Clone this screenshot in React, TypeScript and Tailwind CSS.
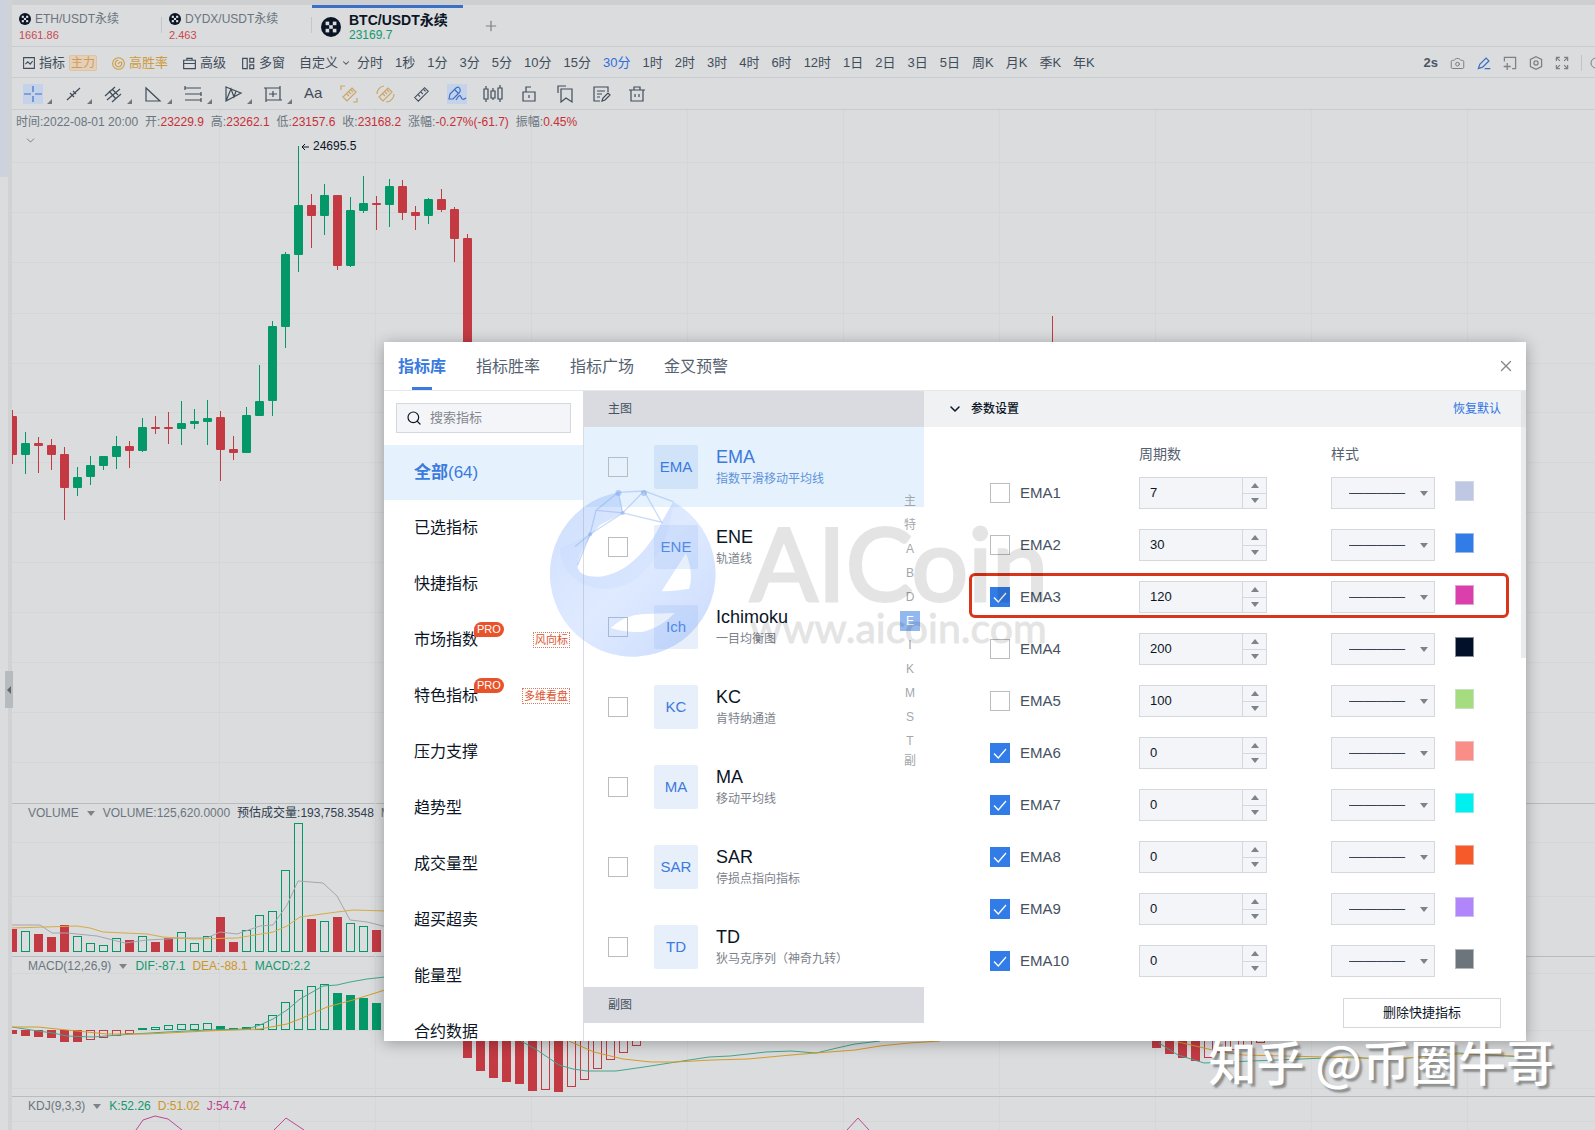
import React from 'react';
import { Camera, ChevronDown, Plus, Search, X } from 'lucide-react';

const UP = '#049868';
const DOWN = '#c33a43';
const STEP = 13;

// [direction, high, body top, body bottom, low]
type Candle = ['u' | 'd', number, number, number, number];

const candles: Candle[] = [
  ['d', 300, 306, 345, 354],
  ['u', 322, 333, 345, 364],
  ['d', 327, 333, 336, 363],
  ['d', 329, 335, 345, 360],
  ['d', 337, 344, 378, 410],
  ['u', 357, 367, 378, 386],
  ['u', 346, 355, 367, 375],
  ['u', 346, 346, 356, 360],
  ['u', 326, 336, 347, 359],
  ['d', 331, 336, 341, 358],
  ['u', 308, 317, 341, 342],
  ['d', 306, 317, 319, 324],
  ['d', 302, 317, 319, 334],
  ['u', 291, 313, 319, 335],
  ['u', 299, 311, 314, 319],
  ['u', 290, 308, 312, 335],
  ['d', 301, 307, 340, 371],
  ['d', 326, 339, 343, 350],
  ['u', 297, 305, 343, 343],
  ['u', 255, 291, 306, 306],
  ['u', 211, 216, 291, 306],
  ['u', 142, 144, 217, 238],
  ['u', 36, 95, 145, 162],
  ['d', 84, 95, 106, 138],
  ['u', 74, 85, 106, 125],
  ['d', 85, 85, 156, 160],
  ['u', 87, 100, 156, 157],
  ['u', 66, 93, 101, 103],
  ['d', 86, 93, 95, 120],
  ['u', 69, 76, 95, 117],
  ['d', 70, 76, 103, 110],
  ['d', 96, 102, 106, 120],
  ['u', 88, 89, 106, 114],
  ['d', 79, 89, 100, 102],
  ['d', 97, 99, 129, 152],
  ['d', 124, 128, 300, 300],
];

const volumeTops = [
  126, 128, 131, 134, 122, 133, 140, 142, 135, 137, 133, 139, 135, 129, 140,
  133, 114, 139, 127, 112, 108, 67, 20, 116, 118, 114, 120, 123, 127,
];

// [index, y of the bar end, solid]
const macdBars: [number, number, boolean][] = [
  [0, 78, true], [1, 80, true], [2, 81, true], [3, 82, true], [4, 86, true], [5, 86, true],
  [6, 84, false], [7, 82, false], [8, 80, false], [9, 78, false],
  [10, 72, true], [11, 71, false], [12, 69, false], [13, 68, false], [14, 68, false], [15, 67, false],
  [16, 70, true], [17, 72, true], [18, 71, true],
  [19, 68, false], [20, 59, false], [21, 46, false], [22, 34, false], [23, 30, false], [24, 28, false],
  [25, 37, true], [26, 39, true], [27, 42, true], [28, 47, true],
  [35, 102, true], [36, 115, true], [37, 122, true], [38, 126, true], [39, 128, true], [40, 135, true],
  [41, 134, false], [42, 136, true], [43, 131, false], [44, 124, false], [45, 113, false],
  [46, 104, false], [47, 97, false], [48, 90, false],
  [88, 92, true], [89, 98, true], [90, 102, true], [91, 105, true],
  [92, 102, false], [93, 97, false], [94, 94, false], [95, 90, false], [96, 87, false],
];

const periods = [
  '分时', '1秒', '1分', '3分', '5分', '10分', '15分', '30分', '1时', '2时', '3时', '4时',
  '6时', '12时', '1日', '2日', '3日', '5日', '周K', '月K', '季K', '年K',
];

const quote = [
  ['开', '23229.9'],
  ['高', '23262.1'],
  ['低', '23157.6'],
  ['收', '23168.2'],
  ['涨幅', '-0.27%(-61.7)'],
  ['振幅', '0.45%'],
];

const categories: { name: string; pro?: boolean; tag?: string }[] = [
  { name: '已选指标' },
  { name: '快捷指标' },
  { name: '市场指数', pro: true, tag: '风向标' },
  { name: '特色指标', pro: true, tag: '多维看盘' },
  { name: '压力支撑' },
  { name: '趋势型' },
  { name: '成交量型' },
  { name: '超买超卖' },
  { name: '能量型' },
  { name: '合约数据' },
];

const indicators = [
  { short: 'EMA', name: 'EMA', desc: '指数平滑移动平均线', active: true },
  { short: 'ENE', name: 'ENE', desc: '轨道线' },
  { short: 'Ich', name: 'Ichimoku', desc: '一目均衡图' },
  { short: 'KC', name: 'KC', desc: '肯特纳通道' },
  { short: 'MA', name: 'MA', desc: '移动平均线' },
  { short: 'SAR', name: 'SAR', desc: '停损点指向指标' },
  { short: 'TD', name: 'TD', desc: '狄马克序列（神奇九转）' },
];

const letters = ['主', '特', 'A', 'B', 'D', 'E', 'I', 'K', 'M', 'S', 'T', '副'];

const params = [
  { name: 'EMA1', value: 7, checked: false, color: 'bg-[#bfc8e2]' },
  { name: 'EMA2', value: 30, checked: false, color: 'bg-[#327ce8]' },
  { name: 'EMA3', value: 120, checked: true, color: 'bg-[#db3fab]', marked: true },
  { name: 'EMA4', value: 200, checked: false, color: 'bg-[#02102a]' },
  { name: 'EMA5', value: 100, checked: false, color: 'bg-[#a6dc80]' },
  { name: 'EMA6', value: 0, checked: true, color: 'bg-[#fa8d88]' },
  { name: 'EMA7', value: 0, checked: true, color: 'bg-[#00f0f0]' },
  { name: 'EMA8', value: 0, checked: true, color: 'bg-[#f65a2a]' },
  { name: 'EMA9', value: 0, checked: true, color: 'bg-[#b186fb]' },
  { name: 'EMA10', value: 0, checked: true, color: 'bg-[#6c757b]' },
];

const Icon: React.FC<{ children: React.ReactNode; className?: string }> = ({ children, className = 'size-5' }) => (
  <svg viewBox="0 0 20 20" fill="none" stroke="currentColor" strokeWidth="1.2" className={className}>
    {children}
  </svg>
);

const Coin: React.FC<{ className: string }> = ({ className }) => (
  <svg viewBox="0 0 20 20" className={className}>
    <circle cx="10" cy="10" r="10" fill="#0b1424" />
    <g fill="#dadcdd">
      <rect x="4.6" y="4.6" width="3.6" height="3.6" />
      <rect x="11.8" y="4.6" width="3.6" height="3.6" />
      <rect x="8.2" y="8.2" width="3.6" height="3.6" />
      <rect x="4.6" y="11.8" width="3.6" height="3.6" />
      <rect x="11.8" y="11.8" width="3.6" height="3.6" />
    </g>
  </svg>
);

const Caret: React.FC<{ up?: boolean }> = ({ up }) => (
  <svg viewBox="0 0 8 5" className="w-2 h-[5px]" fill="#7d8388">
    <path d={up ? 'M0 5L4 0L8 5Z' : 'M0 0L4 5L8 0Z'} />
  </svg>
);

const Grid: React.FC<{ rows: number[] }> = ({ rows }) => (
  <g stroke="#d4d6d8" strokeWidth="1">
    {rows.map((y) => (
      <line key={y} x1="0" x2="100%" y1={y + 0.5} y2={y + 0.5} />
    ))}
    {Array.from({ length: 10 }, (_, i) => (
      <line key={i} x1={207.5 + i * 156} x2={207.5 + i * 156} y1="0" y2="100%" />
    ))}
  </g>
);

const Bar: React.FC<{ index: number; top: number; bottom: number; color: string; solid: boolean }> = ({
  index, top, bottom, color, solid,
}) => (
  <rect
    x={index * STEP - 3.5}
    y={top + 0.5}
    width="8"
    height={Math.max(bottom - top - 1, 1)}
    fill={solid ? color : 'none'}
    stroke={color}
  />
);

const CheckBox: React.FC<{ label: string; id: string; checked?: boolean }> = ({ label, id, checked }) => (
  <span className="relative size-5 shrink-0">
    <input
      type="checkbox"
      id={id}
      aria-label={label}
      defaultChecked={checked}
      className="peer block size-5 appearance-none border border-[#b9bcc0] checked:border-[#327ce8] checked:bg-[#327ce8]"
    />
    <svg
      viewBox="0 0 20 20"
      fill="none"
      stroke="#fff"
      strokeWidth="1.3"
      className="pointer-events-none absolute inset-0 hidden size-5 peer-checked:block"
    >
      <path d="M4 10.5L8.3 15L16 6" />
    </svg>
  </span>
);

const SymbolTabs = () => (
  <div className="flex h-[42px] border-b border-[#c8cbd0]">
    {[['ETH/USDT永续', '1661.86'], ['DYDX/USDT永续', '2.463']].map(([name, price]) => (
      <button key={name} className="relative flex w-[150px] flex-col items-start pt-[5px] pl-[7px] text-left">
        <span className="flex items-center gap-1 text-xs leading-[18px] text-[#6b7580]">
          <Coin className="size-3" />
          {name}
        </span>
        <span className="text-[11px] leading-[14px] text-[#cc4850]">{price}</span>
        <span className="absolute top-3 right-0 h-4 w-px bg-[#c3c6ca]" />
      </button>
    ))}
    <button className="flex w-[151px] items-center gap-2 border-t-[3px] border-[#3b6fc6] pl-[9px] text-left">
      <Coin className="size-5" />
      <span className="flex flex-col pb-0.5">
        <span className="text-sm leading-[17px] font-bold text-[#0c1526]">BTC/USDT永续</span>
        <span className="text-xs leading-3 text-[#12996e]">23169.7</span>
      </span>
    </button>
    <button aria-label="添加" className="ml-5 text-[#7b8187]">
      <Plus className="size-4" strokeWidth={1.8} />
    </button>
  </div>
);

const PeriodBar = () => (
  <div className="flex h-[31px] items-center border-b border-[#c8cbd0] pt-0.5 pl-[11px] text-[13px] whitespace-nowrap text-[#414c5b]">
    <button className="flex items-center gap-1">
      <Icon className="size-3">
        <path d="M1 1H19V19H1ZM4 12L8 8L12 12L16 7" strokeWidth="1.8" />
      </Icon>
      指标
    </button>
    <button className="ml-1 rounded-xs border border-[#dcc4a8] bg-[#e2d0bb] px-px text-[12px] leading-[14px] text-[#d49b50]">主力</button>
    <button className="ml-[15px] flex items-center gap-1 text-[#cf9b3f]">
      <Icon className="size-[13px]">
        <circle cx="10" cy="10" r="9" strokeWidth="1.6" />
        <path d="M14 7A5 5 0 1 1 10 5M9 11L13 7" strokeWidth="1.8" />
      </Icon>
      高胜率
    </button>
    <button className="ml-[15px] flex items-center gap-1">
      <Icon className="size-[13px]">
        <path d="M1 5H19V18H1ZM1 10H19M6 5V2H14V5" strokeWidth="1.8" />
      </Icon>
      高级
    </button>
    <button className="ml-4 flex items-center gap-1">
      <Icon className="size-[13px]">
        <path d="M1 2H8V18H1ZM12 2H18V8H12ZM12 12H18V18H12Z" strokeWidth="1.8" />
      </Icon>
      多窗
    </button>
    <button className="ml-[14px] flex items-center gap-[3px]">
      自定义
      <ChevronDown className="size-[10px]" strokeWidth={2.5} />
    </button>
    <div className="ml-[6px] flex gap-3">
      {periods.map((p) => (
        <button key={p} className={p === '30分' ? 'text-[#2f6fdc]' : ''}>{p}</button>
      ))}
    </div>
    <div className="-mr-1 ml-auto flex items-center gap-3 text-[#7b8187]">
      <span className="font-bold text-[#4b5664]">2s</span>
      <button aria-label="截图"><Camera className="size-[15px]" strokeWidth={1.6} /></button>
      <button aria-label="画笔" className="text-[#3b6fc6]">
        <Icon className="size-[14px]">
          <path d="M2 18L4 12L13 3L17 7L8 16ZM11 18H19" strokeWidth="1.8" />
        </Icon>
      </button>
      <button aria-label="新建">
        <Icon className="size-[14px]">
          <path d="M2 8V2H18V18H13M1 15H11M6 10V20" strokeWidth="1.8" />
        </Icon>
      </button>
      <button aria-label="设置">
        <Icon className="size-[14px]">
          <path d="M10 1L18 5V15L10 19L2 15V5Z" strokeWidth="1.8" />
          <circle cx="10" cy="10" r="3" strokeWidth="1.8" />
        </Icon>
      </button>
      <button aria-label="全屏">
        <Icon className="size-[14px]">
          <path d="M2 7V2H7M2 2L7 7M13 2H18V7M18 2L13 7M2 13V18H7M2 18L7 13M18 13V18H13M18 18L13 13" strokeWidth="1.8" />
        </Icon>
      </button>
      <span className="h-4 w-px bg-[#bfc3c7]" />
      <svg viewBox="0 0 9 12" className="-ml-1 h-3 w-[9px]" fill="none" stroke="currentColor">
        <circle cx="6" cy="6" r="5" />
      </svg>
    </div>
  </div>
);

const drawTools: { name: string; icon: React.ReactNode; on?: boolean }[] = [
  { name: '十字光标', on: true, icon: <path d="M10 2V8M10 12V18M1 10H8M12 10H19" /> },
  { name: '线段', icon: <path d="M4 16L17 4M7 9L11 13M10 7L13 10" /> },
  { name: '平行线', icon: <path d="M2 12L12 3M4 16L17 5M9 18L18 10M6 7L13 15M9 5L15 11" /> },
  { name: '三角形', icon: <path d="M3 4V17H17Z" /> },
  { name: '水平线', icon: <path d="M2 4H18M2 10H18M2 16H18M2 2V6M18 8V12M18 14V18" /> },
  { name: '形态', icon: <path d="M3 3L18 9L3 17ZM3 17L8 5L11 13L13 7" /> },
  { name: '矩形', icon: <path d="M3 4H17V16H3ZM10 7V13M6 10H14M1 4H3M17 2V4M3 16V18M17 16H19" /> },
];

const rulerPath = 'M3 14L14 3L18 7L7 18ZM7 11L9 13M10 8L12 10M13 5L15 7';

const DrawBar = () => (
  <div className="flex h-8 items-center border-b border-[#c8cbd0] pl-[11px] text-[#414c5b]">
    {drawTools.map((t) => (
      <button key={t.name} aria-label={t.name} className="flex w-10 items-end">
        <span className={t.on ? 'bg-[#c5d3ea] text-[#3b6fc6]' : ''}>
          <Icon>{t.icon}</Icon>
        </span>
        <svg viewBox="0 0 5 5" className="ml-1 size-[5px]" fill="#71777c">
          <path d="M5 0V5H0Z" />
        </svg>
      </button>
    ))}
    <button className="ml-px w-[35px] text-left text-[15px]">Aa</button>
    <div className="flex gap-4">
      <button aria-label="区间测量" className="text-[#cda567]">
        <Icon><path d="M4 13L13 4L17 8L8 17ZM8 10L10 12M10 8L12 10M12 6L14 8M2 6V2H6M18 14V18H14" /></Icon>
      </button>
      <button aria-label="周期测量" className="text-[#cda567]">
        <Icon><path d="M4 13L13 4L17 8L8 17ZM8 10L10 12M10 8L12 10M12 6L14 8M2 10A8 8 0 0 1 9 2M19 10A8 8 0 0 1 11 18" /></Icon>
      </button>
      <button aria-label="尺子"><Icon className="size-5 p-px"><path d={rulerPath} /></Icon></button>
      <button aria-label="连续画线" className="bg-[#c5d3ea] text-[#3b6fc6]">
        <Icon><path d="M2 15L3 10L9 4Q12 2 13 5Q14 7 12 9L6 15ZM8 6L11 9M9 16Q13 9 14 13Q15 17 19 14" /></Icon>
      </button>
      <button aria-label="K线样式">
        <Icon><path d="M1 5H5V15H1ZM3 2V5M3 15V18M8 7H12V14H8ZM10 4V7M10 14V16M15 4H19V15H15ZM17 1V4M17 15V18" /></Icon>
      </button>
      <button aria-label="锁定">
        <Icon><path d="M4 8H16V17H4ZM7 8V3H12M10 11V14" /></Icon>
      </button>
      <button aria-label="复制">
        <Icon><path d="M6 5H17V18L11 14L6 18ZM3 9V2H11" /></Icon>
      </button>
      <button aria-label="备注">
        <Icon><path d="M9 17H3V3H17V8M6 7H14M6 10H11M6 13H9M11 17L12 14L17 9L19 11L14 16Z" /></Icon>
      </button>
      <button aria-label="删除">
        <Icon><path d="M2 6H18M7 6V3H13V6M4 6V17H16V6M8 10V13M12 10V13" /></Icon>
      </button>
    </div>
  </div>
);

const PriceChart = () => (
  <section className="relative flex-1">
    <svg className="absolute inset-0 h-full w-full">
      <Grid rows={[52, 102, 152, 203, 253, 302, 352, 402, 452, 502, 552, 602, 652]} />
      {candles.map(([dir, high, top, bottom, low], i) => (
        <g key={i} fill={dir === 'u' ? UP : DOWN}>
          <rect x={i * STEP} y={high} width="1" height={low - high} />
          <rect x={i * STEP - 4} y={top} width="9" height={bottom - top} rx="1" />
        </g>
      ))}
      <rect x={80 * STEP} y="206" width="1" height="94" fill={DOWN} />
      <path d="M297 37H290M293 34L290 37L293 40" fill="none" stroke="#0c1526" />
      <text x="301" y="40" fontSize="12" fill="#0c1526">24695.5</text>
    </svg>
    <div className="relative flex gap-[7px] pt-1 pl-1 text-xs leading-4 whitespace-nowrap text-[#6b7580]">
      <span>时间:2022-08-01 20:00</span>
      {quote.map(([label, value]) => (
        <span key={label}>
          {label}:<span className="text-[#c92f38]">{value}</span>
        </span>
      ))}
    </div>
    <button aria-label="收起" className="relative mt-1 ml-3 block text-[#7b8187]">
      <ChevronDown className="size-[13px]" strokeWidth={1.8} />
    </button>
  </section>
);

const PaneTitle: React.FC<{ name: string; children?: React.ReactNode }> = ({ name, children }) => (
  <div className="relative flex h-[18px] items-center pl-4 text-xs whitespace-nowrap text-[#6b7580]">
    {name}
    <span className="mx-2"><Caret /></span>
    <div className="flex gap-[7px]">{children}</div>
  </div>
);

const VolumeChart = () => (
  <section className="relative h-[153px] border-t border-[#b9bcbf]">
    <svg className="absolute -top-px left-0 h-full w-full">
      <Grid rows={[39, 93]} />
      {volumeTops.map((top, i) => (
        <Bar key={i} index={i} top={top} bottom={149} color={candles[i][0] === 'u' ? UP : DOWN} solid={candles[i][0] === 'd'} />
      ))}
      <g fill="none" strokeWidth="1">
        <polyline
          stroke="#a5a6ae"
          points="0,122 28,122 40,130 55,130 85,133 113,140 135,137 155,136 165,135 195,135 208,129 225,131 248,123 261,122 275,102 286,78 311,80 325,93 338,117 355,119 375,124"
        />
        <polyline
          stroke="#d8ab45"
          points="0,125 65,123 78,125 91,129 135,131 151,134 181,136 225,135 261,129 275,123 288,114 325,109 341,107 375,108"
        />
      </g>
    </svg>
    <PaneTitle name="VOLUME">
      <span>VOLUME:125,620.0000</span>
      <span className="text-[#303c4f]">预估成交量:193,758.3548</span>
      <span>M</span>
    </PaneTitle>
  </section>
);

const MacdChart = () => (
  <section className="relative h-[140px] border-t border-[#b9bcbf]">
    <svg className="absolute -top-px left-0 h-full w-full">
      <Grid rows={[17, 74, 132]} />
      {macdBars.map(([i, end, solid]) =>
        end > 74 ? (
          <Bar key={i} index={i} top={74} bottom={end} color={DOWN} solid={solid} />
        ) : (
          <Bar key={i} index={i} top={end} bottom={74} color={UP} solid={solid} />
        )
      )}
      <g fill="none" strokeWidth="1">
        <polyline
          stroke="#45a68e"
          points="0,71 26,75 41,77 55,80 81,81 121,78 155,76 195,74 235,73 248,69 261,63 275,54 288,43 311,30 325,29 338,26 355,23 373,21"
        />
        <polyline
          stroke="#d69c28"
          points="0,71 26,71 55,74 95,78 135,78 195,75 248,73 275,68 288,63 315,51 341,44 373,34"
        />
        <polyline
          stroke="#45a68e"
          points="509,85 525,94 547,109 561,113 575,115 604,115 632,111 664,106 697,101 718,100 754,96 779,95 804,97 825,92 843,88 868,85"
        />
        <polyline
          stroke="#d69c28"
          points="557,85 582,96 611,103 639,106 664,106 700,104 736,103 779,99 804,97 843,94 868,90 897,87 928,85"
        />
        <polyline
          stroke="#45a68e"
          points="1147,87 1166,99 1192,107 1240,105 1338,101 1377,104 1446,97 1511,101"
        />
        <polyline
          stroke="#d69c28"
          points="1166,86 1205,95 1231,99 1313,101 1382,103 1446,98 1502,100"
        />
      </g>
    </svg>
    <PaneTitle name="MACD(12,26,9)">
      <span className="text-[#12996e]">DIF:-87.1</span>
      <span className="text-[#cf9527]">DEA:-88.1</span>
      <span className="text-[#12996e]">MACD:2.2</span>
    </PaneTitle>
  </section>
);

const KdjChart = () => (
  <section className="relative h-[34px] overflow-hidden border-t border-[#b9bcbf]">
    <svg className="absolute -top-px left-0 h-[34px] w-full">
      <Grid rows={[25]} />
      <g fill="none" stroke="#bf4a90">
        <polyline points="124,34 131,24 143,20 156,23 170,34" />
        <polyline points="262,34 274,22 292,34" />
        <polyline points="835,34 846,22 857,34" />
      </g>
    </svg>
    <PaneTitle name="KDJ(9,3,3)">
      <span className="text-[#12996e]">K:52.26</span>
      <span className="text-[#cf9527]">D:51.02</span>
      <span className="text-[#bf3f90]">J:54.74</span>
    </PaneTitle>
  </section>
);

const CategoryList = () => (
  <nav className="w-[200px] shrink-0 overflow-hidden border-r border-[#d9dbe0] [contain:size]">
    <label className="m-3 flex h-[30px] items-center gap-2 border border-[#d5d8dc] bg-[#f4f5f8] pl-[9px]">
      <Search className="size-4 shrink-0 text-[#0c1526]" strokeWidth={1.8} />
      <input
        type="text"
        aria-label="搜索指标"
        placeholder="搜索指标"
        className="w-full min-w-0 bg-transparent text-[13px] outline-none placeholder:text-[#84888e]"
      />
    </label>
    <button className="flex h-[55px] w-full items-center bg-[#e5f2fd] pl-[30px] text-[17px] text-[#3b7ade]">
      <span className="font-bold">全部</span>(64)
    </button>
    {categories.map((c) => (
      <button key={c.name} className="flex h-14 w-full items-center pr-[13px] pl-[30px] text-base text-[#0c1526]">
        <span className="relative">
          {c.name}
          {c.pro && (
            <span className="absolute -top-1.5 left-15 rounded-full rounded-bl-xs bg-[#e8532c] px-[3px] text-[11px] leading-[15px] text-white">
              PRO
            </span>
          )}
        </span>
        {c.tag && (
          <span className="ml-auto border border-dotted border-[#e2785c] px-px text-[11px] leading-[14px] text-[#dc5430]">{c.tag}</span>
        )}
      </button>
    ))}
  </nav>
);

const IndicatorList = () => (
  <div className="relative w-[340px] shrink-0">
    <h3 className="flex h-9 items-center bg-[#d9dbe0] pl-6 text-xs text-[#465162]">主图</h3>
    <ul>
      {indicators.map((item) => (
        <li key={item.name} className={item.active ? 'bg-[#e5f2fd]' : ''}>
          <label className="flex h-20 items-center pl-6">
            <CheckBox id={`pick-${item.name}`} label={item.name} />
            <span className="ml-[26px] flex size-11 items-center justify-center rounded-xs bg-[#3b7ade]/12 text-[15px] text-[#3b7ade]">
              {item.short}
            </span>
            <span className="ml-[18px] flex flex-col">
              <span className={item.active ? 'text-lg leading-6 text-[#3b7ade]' : 'text-lg leading-6 text-[#0c1526]'}>
                {item.name}
              </span>
              <span className={item.active ? 'text-xs leading-5 text-[#5f92da]' : 'text-xs leading-5 text-[#7b828b]'}>
                {item.desc}
              </span>
            </span>
          </label>
        </li>
      ))}
    </ul>
    <h3 className="flex h-9 items-center bg-[#d9dbe0] pl-6 text-xs text-[#465162]">副图</h3>
    <div className="absolute top-[100px] right-1 flex flex-col items-center gap-1 text-xs text-[#a3a7ac]">
      {letters.map((l) => (
        <button key={l} className={l === 'E' ? 'size-5 bg-[#92b8ef] text-white' : 'size-5 last:-mt-1'}>{l}</button>
      ))}
    </div>
  </div>
);

const ParamPanel = () => (
  <div className="relative flex-1">
    <div className="flex h-9 items-center bg-[#eff1f3] pr-[25px] pl-[23px] text-xs">
      <button className="flex items-center gap-2 font-medium text-[#0c1526]">
        <ChevronDown className="size-4" strokeWidth={2.2} />
        参数设置
      </button>
      <button className="ml-auto text-[#2f74e6]">恢复默认</button>
    </div>
    <div className="grid h-10 grid-cols-[149fr_192fr_124fr_20fr] items-center pt-[13px] pr-[51px] pl-[66px] text-sm leading-5 text-[#566170]">
      <span />
      <span>周期数</span>
      <span>样式</span>
      <span />
    </div>
    {params.map((p) => (
      <div key={p.name} className="relative grid h-[52px] grid-cols-[149fr_192fr_124fr_20fr] items-center pr-[51px] pl-[66px]">
        <label htmlFor={p.name} className="flex items-center gap-[10px] text-[15px] text-[#465162]">
          <CheckBox id={p.name} label={p.name} checked={p.checked} />
          {p.name}
        </label>
        <div className="flex h-8 w-32 border border-[#d5d9de] bg-[#f4f5f8]">
          <input
            type="text"
            inputMode="numeric"
            aria-label={`${p.name} 周期数`}
            defaultValue={p.value}
            className="w-full min-w-0 flex-1 bg-transparent pl-[10px] text-[13px] text-[#0c1526] outline-none"
          />
          <div className="flex w-6 flex-col border-l border-[#d5d9de]">
            <button aria-label="增加" className="flex flex-1 items-center justify-center border-b border-[#d5d9de]"><Caret up /></button>
            <button aria-label="减少" className="flex flex-1 items-center justify-center"><Caret /></button>
          </div>
        </div>
        <div className="relative w-[104px]">
          <select
            aria-label={`${p.name} 样式`}
            className="block h-8 w-full appearance-none border border-[#d5d9de] bg-[#f4f5f8] pb-0.5 pl-[17px] text-sm text-[#3c4350] outline-none"
          >
            <option>————</option>
          </select>
          <span className="pointer-events-none absolute inset-y-0 right-[7px] flex items-center"><Caret /></span>
        </div>
        <button aria-label={`${p.name} 颜色`} className={`mb-1 h-5 w-[19px] border border-[#e1e3e8]/60 ${p.color}`} />
        {p.marked && (
          <span className="pointer-events-none absolute top-0.5 right-[17px] bottom-[5px] left-[45px] rounded-md border-[3px] border-[#d9351a]" />
        )}
      </div>
    ))}
    <div className="flex justify-end pt-[11px] pr-[25px] pb-[13px]">
      <button className="h-[30px] w-[158px] border border-[#d5d8dc] bg-white text-[13px] text-[#0c1526]">删除快捷指标</button>
    </div>
    <span className="absolute top-0 right-0 h-[267px] w-[5px] bg-[#d5d8dc]/50" />
  </div>
);

const Watermark = () => (
  <div className="pointer-events-none absolute top-[148px] left-[166px] flex">
    <svg viewBox="30 45 498 505" className="h-[168px] w-[166px]">
      <defs>
        <linearGradient id="ball" x1="0" y1="0" x2="1" y2="1">
          <stop offset="0" stopColor="#6a9cf5" stopOpacity="0.34" />
          <stop offset="0.5" stopColor="#8db4ff" stopOpacity="0.28" />
          <stop offset="1" stopColor="#6f9cf8" stopOpacity="0.38" />
        </linearGradient>
      </defs>
      <path
        fill="url(#ball)"
        fillRule="evenodd"
        d="M235 52A249 249 0 1 0 400 80L365 142C335 210 270 290 190 304C150 310 112 300 112 272C118 230 150 180 180 150L248 114ZM438 235L365 349Q405 350 448 342Q462 295 438 235ZM212 460Q250 422 310 418L405 415Q360 460 310 471Q260 475 212 460Z"
      />
      <path
        fill="#8db4ff"
        fillOpacity="0.08"
        d="M60 220C60 330 200 380 290 310C350 260 390 190 400 80L365 142C335 210 270 290 190 304C150 310 112 300 112 272L150 178Z"
      />
      <g fill="none" stroke="#7ea5ec" strokeOpacity="0.4" strokeWidth="4">
        <path d="M235 52L312 48L400 80M235 52L248 114L312 48L365 142L248 114L168 106L235 52M168 106L150 178L105 215M150 178L112 272M150 178L248 114" />
      </g>
      <g fill="#7ea5ec" fillOpacity="0.5">
        <circle cx="235" cy="54" r="9" />
        <circle cx="312" cy="54" r="9" />
        <circle cx="248" cy="114" r="6" />
        <circle cx="150" cy="178" r="6" />
      </g>
    </svg>
    <div className="ml-[34px] flex flex-col pt-4 font-[Lato,sans-serif] whitespace-nowrap text-black opacity-10">
      <span className="text-[100px] leading-[112px] [-webkit-text-stroke:3px_currentColor]">AICoin</span>
      <span className="-mt-3 text-[41px] leading-[44px] [-webkit-text-stroke:1px_currentColor]">www.aicoin.com</span>
    </div>
  </div>
);

const IndicatorDialog = () => (
  <div role="dialog" aria-label="指标库" className="relative w-full self-start bg-white shadow-[0_2px_14px_rgba(0,0,0,0.3)]">
    <header className="flex h-[49px] items-stretch border-b border-[#e6e8ea] pr-[11px] pl-[14px] text-base text-[#566170]">
      <button className="relative pt-0.5 font-bold text-[#3b7ade]">
        指标库
        <span className="absolute bottom-0 left-[14px] h-[3px] w-5 bg-[#3b7ade]" />
      </button>
      <button className="ml-[30px] pt-0.5">指标胜率</button>
      <button className="ml-[30px] pt-0.5">指标广场</button>
      <button className="ml-[30px] pt-0.5">金叉预警</button>
      <button aria-label="关闭" className="ml-auto text-[#84888e]">
        <X className="size-[18px]" strokeWidth={1.8} />
      </button>
    </header>
    <div className="flex">
      <CategoryList />
      <IndicatorList />
      <ParamPanel />
    </div>
    <Watermark />
  </div>
);

const App = () => {
  return (
    <div className="relative flex min-h-screen overflow-hidden bg-[#dadcdd] font-['Liberation_Sans','Noto_Sans_CJK_SC',sans-serif]">
      <aside className="relative w-3 shrink-0 border-r-4 border-[#d0d2d3]">
        <div className="h-[177px] bg-[#cdd3dc]" />
        <button
          aria-label="展开"
          className="absolute top-[671px] left-[5px] flex h-[37px] w-2 items-center justify-center bg-[#b5bbbf]"
        >
          <svg viewBox="0 0 4 8" className="h-2 w-1" fill="#60676c">
            <path d="M4 0V8L0 4Z" />
          </svg>
        </button>
      </aside>
      <main className="flex min-w-0 flex-1 flex-col border-t-[5px] border-[#cecfd1]">
        <SymbolTabs />
        <PeriodBar />
        <DrawBar />
        <PriceChart />
        <VolumeChart />
        <MacdChart />
        <KdjChart />
      </main>
      <div className="absolute inset-0 flex pt-[342px] pr-[69px] pl-96">
        <IndicatorDialog />
      </div>
      <div className="pointer-events-none absolute right-[41px] bottom-10 font-['Noto_Sans_CJK_SC',sans-serif] text-[48px] leading-[60px] font-medium whitespace-nowrap text-white [text-shadow:3px_3px_2px_rgba(90,90,90,0.6)]">
        知乎 @币圈牛哥
      </div>
    </div>
  );
};

export default App;
